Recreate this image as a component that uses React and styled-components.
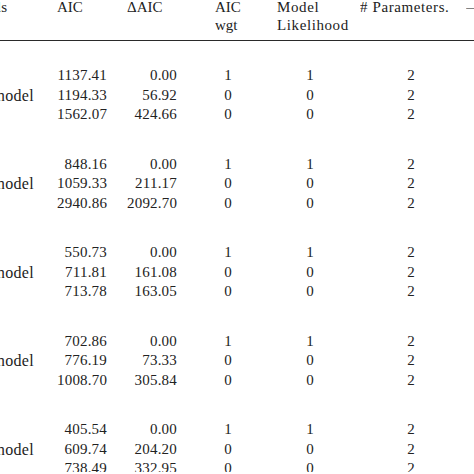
import React from 'react';
import styled, { createGlobalStyle } from 'styled-components';

const GlobalStyle = createGlobalStyle`
  html, body {
    margin: 0;
    padding: 0;
    background: #fff;
    overflow: hidden;
  }
  body {
    font-family: "Liberation Serif", "Times New Roman", serif;
    color: #222;
  }
`;

// column widths and where the value sits inside each one
const COLS = '57px 70px 88px 62px 83px 106px 1fr';

const Sheet = styled.div`
  width: 474px;
  height: 474px;
  overflow: hidden;
  margin-top: -2px;
`;

const HeadRow = styled.div`
  display: grid;
  grid-template-columns: ${COLS};
  font-size: 15px;
  line-height: 18px;
  padding-bottom: 6px;
  border-bottom: 1.6px solid #2a2a2a;
`;

const HeadCell = styled.div`
  white-space: pre;
  overflow: hidden;
  display: flex;
  justify-content: ${p => (p.$end ? 'flex-end' : 'flex-start')};
  padding-right: ${p => p.$pr || 0}px;
  letter-spacing: ${p => p.$wide ? '0.6px' : '0'};
`;

const Body = styled.div`
  padding-top: 25px;
  display: flex;
  flex-direction: column;
  gap: 30px;
`;

const Group = styled.div`
  display: flex;
  flex-direction: column;
`;

const Row = styled.div`
  display: grid;
  grid-template-columns: ${COLS};
  font-size: 15px;
  line-height: 19.5px;
`;

const Label = styled.div`
  display: flex;
  justify-content: flex-end;
  white-space: nowrap;
  overflow: hidden;
  padding-right: 23px;
  font-size: 16px;
  letter-spacing: 0.3px;
`;

const Num = styled.div`
  text-align: ${p => p.$align || 'right'};
  padding-right: ${p => p.$pr}px;
  white-space: nowrap;
  letter-spacing: 0.2px;
`;

const groups = [
  [
    ['1137.41', '0.00', '1', '1', '2'],
    ['1194.33', '56.92', '0', '0', '2'],
    ['1562.07', '424.66', '0', '0', '2'],
  ],
  [
    ['848.16', '0.00', '1', '1', '2'],
    ['1059.33', '211.17', '0', '0', '2'],
    ['2940.86', '2092.70', '0', '0', '2'],
  ],
  [
    ['550.73', '0.00', '1', '1', '2'],
    ['711.81', '161.08', '0', '0', '2'],
    ['713.78', '163.05', '0', '0', '2'],
  ],
  [
    ['702.86', '0.00', '1', '1', '2'],
    ['776.19', '73.33', '0', '0', '2'],
    ['1008.70', '305.84', '0', '0', '2'],
  ],
  [
    ['405.54', '0.00', '1', '1', '2'],
    ['609.74', '204.20', '0', '0', '2'],
    ['738.49', '332.95', '0', '0', '2'],
  ],
];

export default function App() {
  return (
    <>
      <GlobalStyle />
      <Sheet>
        <HeadRow>
          <HeadCell $end $pr={50}>Models</HeadCell>
          <HeadCell>AIC</HeadCell>
          <HeadCell>ΔAIC</HeadCell>
          <HeadCell>{'AIC\nwgt'}</HeadCell>
          <HeadCell $wide>{'Model\nLikelihood'}</HeadCell>
          <HeadCell $wide># Parameters.</HeadCell>
          <HeadCell>—</HeadCell>
        </HeadRow>
        <Body>
          {groups.map((g, gi) => (
            <Group key={gi}>
              {g.map((r, ri) => (
                <Row key={ri}>
                  <Label>{ri === 1 ? 'Null model' : ''}</Label>
                  <Num $pr={20}>{r[0]}</Num>
                  <Num $pr={38}>{r[1]}</Num>
                  <Num $align="center" $pr={36}>{r[2]}</Num>
                  <Num $align="center" $pr={17}>{r[3]}</Num>
                  <Num $align="center" $pr={4}>{r[4]}</Num>
                  <Num />
                </Row>
              ))}
            </Group>
          ))}
        </Body>
      </Sheet>
    </>
  );
}
